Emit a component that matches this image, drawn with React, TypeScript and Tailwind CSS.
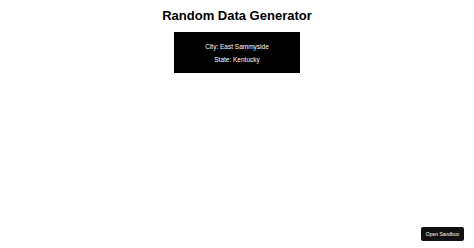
import React from "react";

export default function App() {
  return (
    <div className="relative w-[474px] h-[248px] bg-white overflow-hidden" style={{ fontFamily: '"Liberation Sans", Arial, sans-serif' }}>
      <div className="flex flex-col items-center">
        <h1 className="mt-[8px] text-[13px] leading-[15px] font-bold text-black">Random Data Generator</h1>
        <div className="mt-[9px] w-[126px] h-[41px] bg-black flex flex-col items-center pt-[11px] gap-[5px] text-white text-[6.5px] leading-[8px]">
          <p>City: East Sammyside</p>
          <p>State: Kentucky</p>
        </div>
      </div>
      <div className="absolute left-[421px] top-[227px] w-[43px] h-[14px] bg-[#111] rounded-[2px] flex items-center justify-center text-white text-[5px] leading-[6px]">
        Open Sandbox
      </div>
    </div>
  );
}
